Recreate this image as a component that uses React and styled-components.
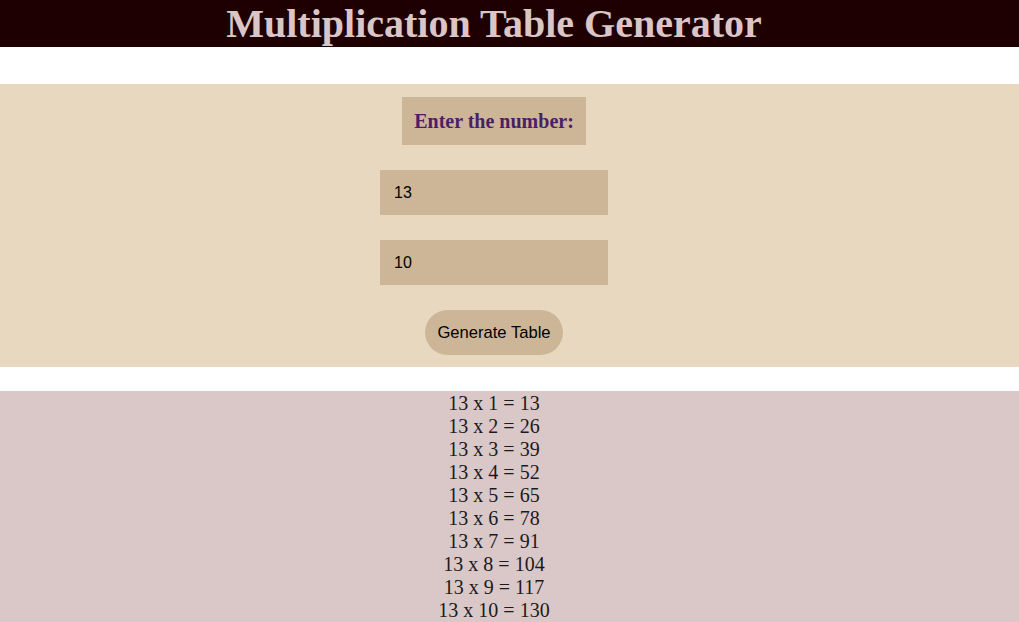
import React, { useState } from "react";
import styled, { createGlobalStyle } from "styled-components";

const Global = createGlobalStyle`
  html, body { margin: 0; padding: 0; background: #ffffff; }
  body { font-family: "Liberation Serif", "Times New Roman", serif; }
`;

const Header = styled.header`
  background: #1f0002;
  height: 47px;
  display: flex;
  align-items: center;
  justify-content: center;
  padding-right: 31px;
  overflow: hidden;
`;

const Title = styled.h1`
  margin: 0;
  color: #dac6c6;
  font-family: "Liberation Serif", "Times New Roman", serif;
  font-weight: bold;
  font-size: 40px;
  line-height: 47px;
  white-space: nowrap;
`;

const FormSection = styled.section`
  margin-top: 37px;
  background: #e8d8c0;
  display: flex;
  flex-direction: column;
  align-items: center;
  padding: 13px 31px 12px 0;
`;

const Label = styled.label`
  background: #cdb697;
  color: #4a1f66;
  font-weight: bold;
  font-size: 20px;
  height: 48px;
  padding: 0 12px;
  display: flex;
  align-items: center;
  box-sizing: border-box;
  margin-bottom: 25px;
`;

const Input = styled.input`
  width: 228px;
  height: 45px;
  box-sizing: border-box;
  border: none;
  outline: none;
  background: #cdb697;
  padding: 0 14px;
  font-family: "Liberation Sans", Arial, sans-serif;
  font-size: 16px;
  color: #000;
  margin-bottom: 25px;
`;

const Button = styled.button`
  width: 138px;
  height: 45px;
  padding: 0;
  border: none;
  border-radius: 23px;
  background: #cdb697;
  font-family: "Liberation Sans", Arial, sans-serif;
  font-size: 16.6px;
  color: #000;
  cursor: pointer;
`;

const Results = styled.section`
  margin-top: 24px;
  background: #dac8c8;
  display: flex;
  flex-direction: column;
  align-items: center;
  padding: 1px 31px 4px 0;
`;

const Line = styled.div`
  font-size: 20px;
  line-height: 23px;
  color: #1a1a1a;
`;

export default function App() {
  const [num, setNum] = useState("13");
  const [count, setCount] = useState("10");
  const [table, setTable] = useState({ n: 13, c: 10 });
  const rows = [];
  for (let i = 1; i <= table.c; i++) rows.push(i);
  return (
    <>
      <Global />
      <Header>
        <Title>Multiplication Table Generator</Title>
      </Header>
      <FormSection>
        <Label>Enter the number:</Label>
        <Input value={num} onChange={(e) => setNum(e.target.value)} />
        <Input value={count} onChange={(e) => setCount(e.target.value)} />
        <Button onClick={() => setTable({ n: Number(num), c: Number(count) })}>
          Generate Table
        </Button>
      </FormSection>
      <Results>
        {rows.map((i) => (
          <Line key={i}>
            {table.n} x {i} = {table.n * i}
          </Line>
        ))}
      </Results>
    </>
  );
}
